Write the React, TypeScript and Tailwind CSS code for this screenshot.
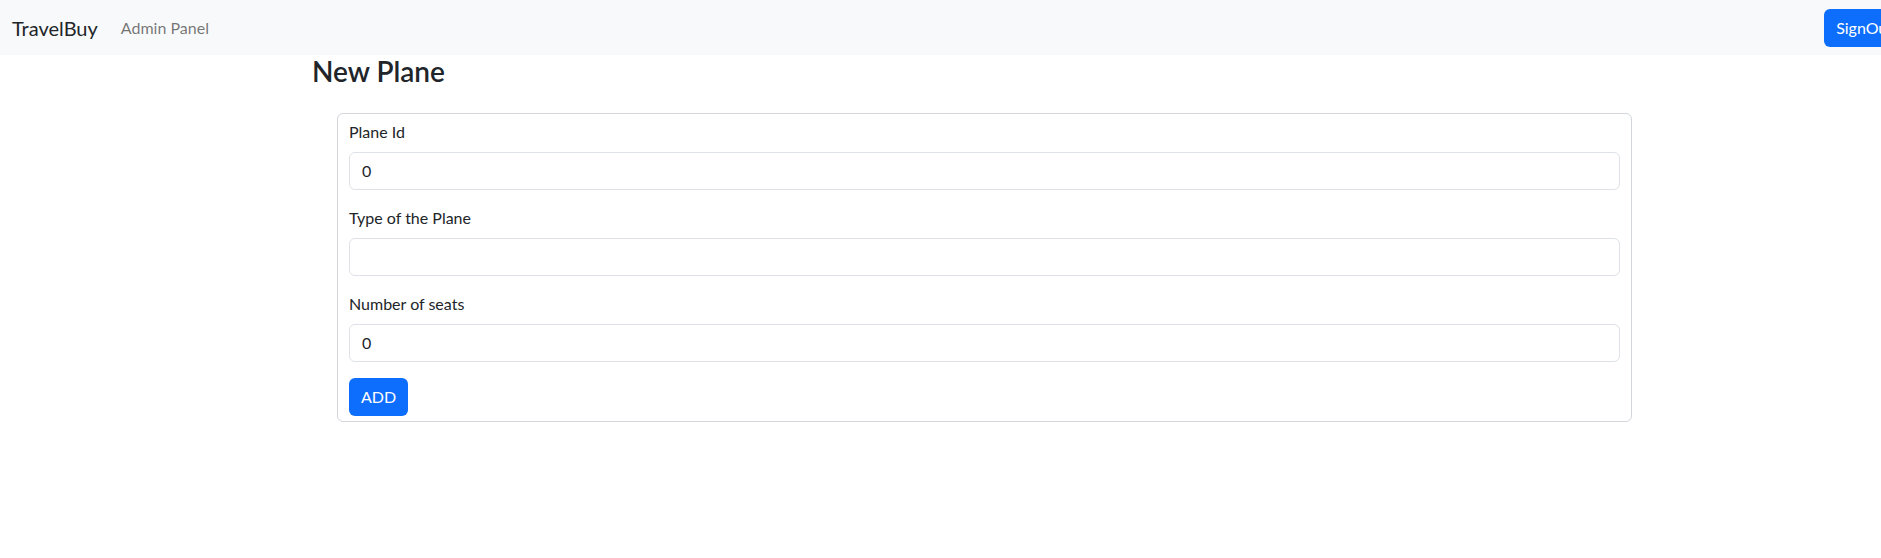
const fields = [
  { label: 'Plane Id', value: '0' },
  { label: 'Type of the Plane', value: '' },
  { label: 'Number of seats', value: '0' },
];

const Navbar = () => {
  return (
    <div className="h-[55px] bg-[#f8f9fa] flex items-center">
      <div className="pl-3 text-[20px] leading-[30px] text-[#212529]">TravelBuy</div>
      <div className="ml-[23px] text-[16px] text-[rgba(0,0,0,0.55)]">Admin Panel</div>
      <div className="flex-1" />
      <button className="shrink-0 h-[38px] px-3 rounded-[6px] bg-[#0d6efd] text-white text-[16px] mr-[-24px] whitespace-nowrap">
        SignOut
      </button>
    </div>
  );
};

export default function App() {
  return (
    <div
      className="min-h-[558px] bg-white text-[#212529] overflow-hidden"
      style={{ fontFamily: 'Lato, "Open Sans", sans-serif' }}
    >
      <Navbar />
      <div className="pl-[312px] w-[1632px]">
        <h3 className="text-[28px] font-semibold leading-[33.6px] mb-[24px]">New Plane</h3>
        <form
          className="ml-[25px] border border-[#d3d6da] rounded-[6px] pt-[6px] pb-[5px] px-[11px]"
          onSubmit={e => e.preventDefault()}
        >
          {fields.map(f => (
            <div key={f.label} className="mb-4">
              <label className="block text-[16px] leading-[24px] mb-2">{f.label}</label>
              <input
                className="block w-full h-[38px] border border-[#dee2e6] rounded-[6px] px-3 text-[16px] outline-none"
                defaultValue={f.value}
              />
            </div>
          ))}
          <button className="h-[38px] px-3 rounded-[6px] bg-[#0d6efd] text-white text-[16px]">
            ADD
          </button>
        </form>
      </div>
    </div>
  );
}
